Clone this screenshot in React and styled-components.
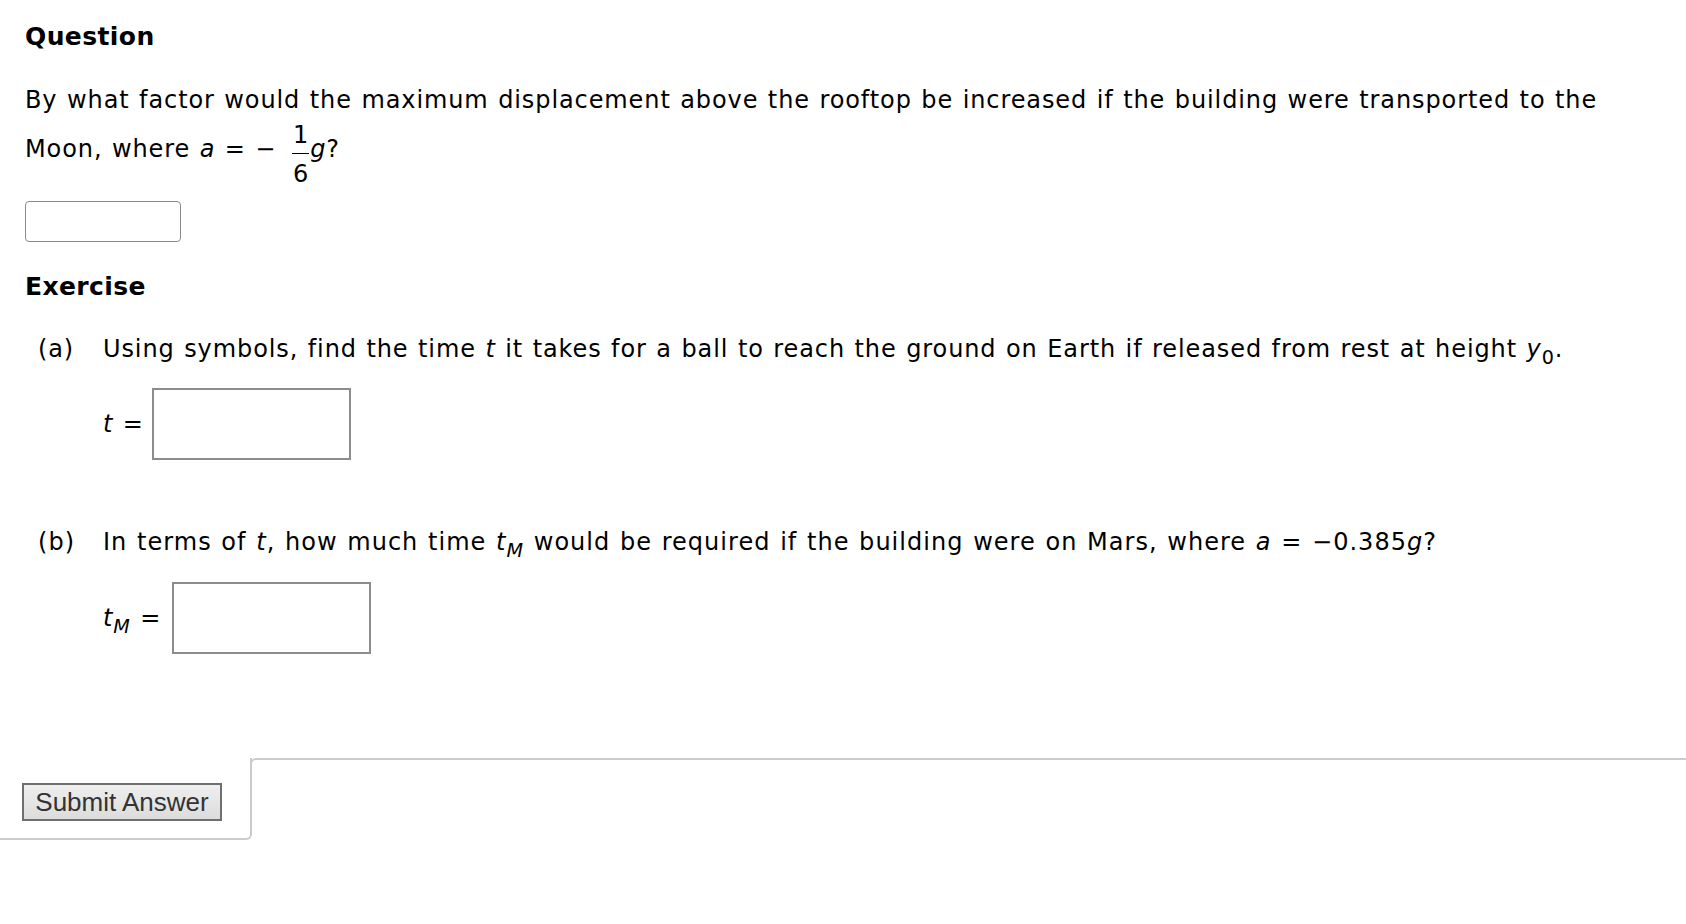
import React from "react";
import styled, { createGlobalStyle } from "styled-components";

const GlobalStyle = createGlobalStyle`
  body {
    margin: 0;
    background: #fff;
    color: #000;
    font-family: "DejaVu Sans", Verdana, sans-serif;
  }
`;

const Page = styled.div`
  padding: 0 0 0 25px;
`;

const Heading = styled.h2`
  font-size: 25px;
  font-weight: bold;
  letter-spacing: 0.4px;
  margin: 0;
  padding-top: ${(p) => (p.$first ? 22 : 0)}px;
  line-height: 30px;
`;

const Prompt = styled.p`
  font-size: 24px;
  line-height: 46px;
  letter-spacing: 0.9px;
  word-spacing: 1px;
  margin: 25px 0 0;
  padding-right: 60px;
`;

const Var = styled.i`
  font-style: italic;
`;

const Sub = styled.sub`
  font-size: 0.8em;
  vertical-align: -0.35em;
  line-height: 0;
`;

const Frac = styled.span`
  display: inline-block;
  text-align: center;
  vertical-align: -25px;
  margin: 0 1px 0 6px;
  line-height: 24px;
  letter-spacing: 0;
`;

const Num = styled.span`
  display: block;
  padding: 0 1px 6px;
`;

const Den = styled.span`
  display: block;
  border-top: 1px solid #000;
  padding: 8px 1px 0;
`;

const AnswerBox = styled.input`
  display: block;
  box-sizing: border-box;
  width: ${(p) => p.$w}px;
  height: ${(p) => p.$h}px;
  border: ${(p) => (p.$round ? "1.5px solid #8a8a8a" : "2px solid #8c8c8c")};
  border-radius: ${(p) => (p.$round ? "4px" : "0")};
  background: #fff;
  margin: 0;
  padding: 0 6px;
  font-size: 20px;
  font-family: inherit;
  outline: none;
`;

const Section = styled.div`
  margin-top: ${(p) => p.$top}px;
`;

const Part = styled.div`
  display: grid;
  grid-template-columns: 65px 1fr;
  font-size: 24px;
  line-height: 30px;
  letter-spacing: ${(p) => p.$track || 0.9}px;
  word-spacing: 1px;
  margin-top: ${(p) => p.$top}px;
  padding-left: 13px;
`;

const PartLabel = styled.span``;

const PartBody = styled.div``;

const AnswerRow = styled.div`
  display: flex;
  align-items: center;
  gap: ${(p) => p.$gap || 8}px;
  margin-top: ${(p) => p.$top}px;
  font-size: 24px;
  letter-spacing: 0.9px;
`;

const Footer = styled.div`
  display: flex;
  margin-top: 104px;
`;

const ButtonCell = styled.div`
  box-sizing: border-box;
  width: 252px;
  height: 82px;
  padding: 25px 0 0 22px;
  border-right: 2px solid #cbcbcb;
  border-bottom: 2px solid #cbcbcb;
  border-bottom-right-radius: 6px;
`;

const Spacer = styled.div`
  flex: 1;
  height: 40px;
  margin-left: -2px;
  border-top: 2px solid #cbcbcb;
  border-left: 2px solid #cbcbcb;
  border-top-left-radius: 6px;
`;

const SubmitButton = styled.button`
  box-sizing: border-box;
  width: 200px;
  height: 38px;
  border: 2px solid #6f6f6f;
  background: linear-gradient(#efefef, #dcdcdc);
  color: #333;
  font-family: "Liberation Sans", Arial, sans-serif;
  font-size: 26px;
  padding: 0;
  line-height: 32px;
`;

export default function App() {
  return (
    <>
      <GlobalStyle />
      <Page>
        <Heading $first>Question</Heading>
        <Prompt>
          By what factor would the maximum displacement above the rooftop be
          increased if the building were transported to the Moon, where{" "}
          <Var>a</Var> = −{" "}
          <Frac>
            <Num>1</Num>
            <Den>6</Den>
          </Frac>
          <Var>g</Var>?
        </Prompt>
        <Section $top={15}>
          <AnswerBox $w={156} $h={41} $round />
        </Section>
        <Section $top={30}>
          <Heading as="h3">Exercise</Heading>
        </Section>
        <Part $top={32}>
          <PartLabel>(a)</PartLabel>
          <PartBody>
            Using symbols, find the time <Var>t</Var> it takes for a ball to
            reach the ground on Earth if released from rest at height{" "}
            <Var>y</Var>
            <Sub>0</Sub>.
            <AnswerRow $top={24}>
              <span>
                <Var>t</Var> =
              </span>
              <AnswerBox $w={199} $h={72} />
            </AnswerRow>
          </PartBody>
        </Part>
        <Part $top={67} $track={1.03}>
          <PartLabel>(b)</PartLabel>
          <PartBody>
            In terms of <Var>t</Var>, how much time <Var>t</Var>
            <Sub>
              <Var>M</Var>
            </Sub>{" "}
            would be required if the building were on Mars, where <Var>a</Var>{" "}
            = −0.385<Var>g</Var>?
            <AnswerRow $top={25} $gap={11}>
              <span>
                <Var>t</Var>
                <Sub>
                  <Var>M</Var>
                </Sub>{" "}
                =
              </span>
              <AnswerBox $w={199} $h={72} />
            </AnswerRow>
          </PartBody>
        </Part>
      </Page>
      <Footer>
        <ButtonCell>
          <SubmitButton>Submit Answer</SubmitButton>
        </ButtonCell>
        <Spacer />
      </Footer>
    </>
  );
}
